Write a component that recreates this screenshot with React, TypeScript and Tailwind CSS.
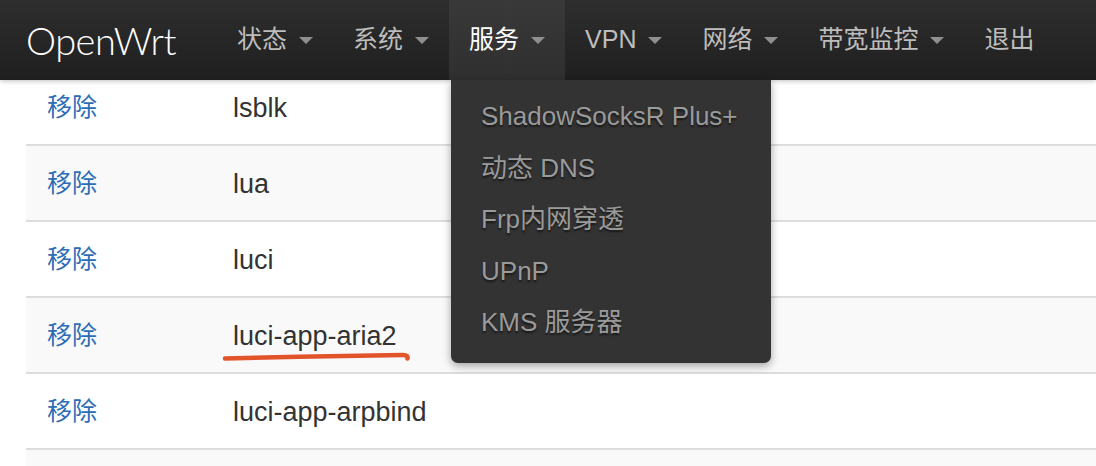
import React from "react";

const navItems = [
  { label: "状态", caret: true },
  { label: "系统", caret: true },
  { label: "服务", caret: true, active: true },
  { label: "VPN", caret: true },
  { label: "网络", caret: true },
  { label: "带宽监控", caret: true },
  { label: "退出", caret: false },
];

const menuItems = ["ShadowSocksR Plus+", "动态 DNS", "Frp内网穿透", "UPnP", "KMS 服务器"];

const packages = ["lsblk", "lua", "luci", "luci-app-aria2", "luci-app-arpbind"];

const Caret = () => (
  <span className="ml-[12px] inline-block h-0 w-0 border-x-[7px] border-t-[7px] border-x-transparent border-t-[#8f8f8f]"></span>
);

const Dropdown = () => (
  <div className="absolute left-[2px] top-full z-20 w-[320px] h-[283px] rounded-b-[7px] bg-[#333333] pt-[11px] shadow-[0_3px_8px_rgba(0,0,0,0.35)]">
    {menuItems.map((item) => (
      <div
        key={item}
        className="flex h-[51.5px] items-center pl-[30px] text-[26px] text-[#9a9a9a] [text-shadow:0_2px_2px_rgba(0,0,0,0.55)]"
      >
        {item}
      </div>
    ))}
  </div>
);

const Header = () => (
  <header className="relative z-10 flex h-[80px] items-stretch bg-gradient-to-b from-[#2e2e2e] to-[#1f1f1f] shadow-[0_1px_5px_rgba(0,0,0,0.25)]">
    <div className="flex w-[217px] items-center pl-[26px] font-['Lato',sans-serif] text-[38px] font-light tracking-[-0.5px] text-white">
      OpenWrt
    </div>
    <nav className="flex items-stretch">
      {navItems.map((item) => (
        <div
          key={item.label}
          className={
            item.active
              ? "relative flex items-center px-[20px] bg-gradient-to-b from-[#393939] to-[#2f2f2f] text-white"
              : "relative flex items-center px-[20px] text-[#bdbdbd]"
          }
        >
          <span className="text-[25px]">{item.label}</span>
          {item.caret && <Caret />}
          {item.active && <Dropdown />}
        </div>
      ))}
    </nav>
  </header>
);

const Underline = () => (
  <svg className="absolute left-[-11px] top-full" width="192" height="14" viewBox="0 0 192 14">
    <path
      d="M3 7.5 C 60 6, 130 4.5, 181 4 C 185 4, 186 5.5, 185.5 7.5"
      fill="none"
      stroke="#e2552b"
      strokeWidth="4.5"
      strokeLinecap="round"
    />
  </svg>
);

export default function App() {
  return (
    <div className="relative h-[466px] w-[1096px] overflow-hidden bg-white font-['Liberation_Sans','Noto_Sans_CJK_SC',sans-serif]">
      <Header />
      <div className="-mt-[12px] ml-[26px]">
        {packages.map((name, i) => (
          <div
            key={name}
            className={
              i % 2 === 1
                ? "grid h-[76px] grid-cols-[186px_1fr] items-center border-t-2 border-[#dddddd] bg-[#f9f9f9]"
                : "grid h-[76px] grid-cols-[186px_1fr] items-center border-t-2 border-[#dddddd] bg-white"
            }
          >
            <div className="px-[21px] pt-[2px] text-[25px] text-[#2d6db6]">移除</div>
            <div className="px-[21px] pt-[2px] text-[27px] text-[#333333]">
              <span className="relative inline-block leading-[30px]">
                {name}
                {name === "luci-app-aria2" && <Underline />}
              </span>
            </div>
          </div>
        ))}
        <div className="h-[76px] border-t-2 border-[#dddddd] bg-[#f9f9f9]"></div>
      </div>
    </div>
  );
}
